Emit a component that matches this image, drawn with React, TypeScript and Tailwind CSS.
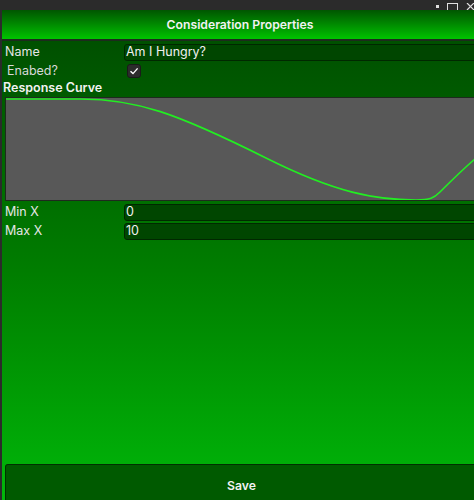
import React from "react";

const font = { fontFamily: "Inter, 'Noto Sans', sans-serif" };

const FieldRow: React.FC<{ label: string; value: string }> = ({ label, value }) => (
  <div className="flex items-center h-[19px]">
    <span className="w-[122px] pl-[3px] text-[12.5px] text-[#e6e6e6] leading-none">{label}</span>
    <div className="flex-1 h-[17px] rounded-[3px] border border-[#002800] bg-[#004600] flex items-center pl-[1px] text-[12.5px] text-[#f0f0f0] leading-none">
      {value}
    </div>
  </div>
);

const ResponseCurve: React.FC = () => (
  <div className="ml-[3px] mt-[1px] h-[104px] shrink-0 border border-[#1e2a1e] bg-[#585858] overflow-hidden">
    <svg width="480" height="104" viewBox="0 0 480 104" className="block">
      <path
        d="M0 1 L75 1 C130 1 170 15 260 60 C330 95 370 102 410 102 C424 102 428 100 434 94 C442 86 456 72 470 60"
        fill="none"
        stroke="#22ee22"
        strokeWidth="1.6"
      />
    </svg>
  </div>
);

export default function App() {
  return (
    <div className="w-[474px] h-[500px] overflow-hidden bg-[#2b2b2b] flex flex-col" style={font}>
      <div className="h-[10px] shrink-0 flex justify-end items-end gap-[8px]">
        <span className="w-[3px] h-[3px] bg-[#e0e0e0] mb-[2px]" />
        <span className="w-[11px] h-[7px] border border-b-0 border-[#e0e0e0]" />
        <svg width="8" height="7" viewBox="0 0 8 7" className="block">
          <path d="M1 0 L8 7 M8 0 L1 7" stroke="#e0e0e0" strokeWidth="1.2" />
        </svg>
      </div>
      <div className="flex flex-1 min-h-0">
        <div className="w-[2px] shrink-0 bg-[#2b2b2b]" />
        <div className="w-[476px] shrink-0 flex flex-col min-h-0">
          <div className="h-[29px] shrink-0 bg-gradient-to-b from-[#005600] to-[#00c400] flex items-center justify-center pt-[1px] text-[12.2px] font-semibold text-[#f2f2f2]">
            Consideration Properties
          </div>
          <div className="h-[2px] shrink-0 bg-[#1d2b1d]" />
          <div className="flex-1 min-h-0 overflow-hidden bg-gradient-to-b from-[#005000] via-[#007d00] to-[#00b80a] flex flex-col pt-[2px]">
            <FieldRow label="Name" value="Am I Hungry?" />
            <div className="flex items-center h-[18px]">
              <span className="w-[125px] pl-[5px] text-[12.5px] text-[#d8d8d8] leading-none">Enabed?</span>
              <div className="w-[14px] h-[14px] rounded-[3px] bg-[#2c2c2c] border border-[#1a1a1a] flex items-center justify-center">
                <svg width="10" height="10" viewBox="0 0 10 10">
                  <path d="M1.5 5.2 L4 7.6 L8.6 2.4" fill="none" stroke="#ffffff" strokeWidth="1.4" />
                </svg>
              </div>
            </div>
            <div className="pl-[1px] text-[12.5px] font-semibold text-[#f2f2f2] leading-[16px]">Response Curve</div>
            <ResponseCurve />
            <div className="mt-[2px]">
              <FieldRow label="Min X" value="0" />
            </div>
            <FieldRow label="Max X" value="10" />
            <div className="mt-auto ml-[3px] h-[36px] shrink-0 rounded-t-[3px] border border-b-0 border-[#003000] bg-[#005a00] flex items-start pt-[12px] justify-center text-[12.2px] font-semibold text-[#f2f2f2]">
              Save
            </div>
          </div>
        </div>
      </div>
    </div>
  );
}
